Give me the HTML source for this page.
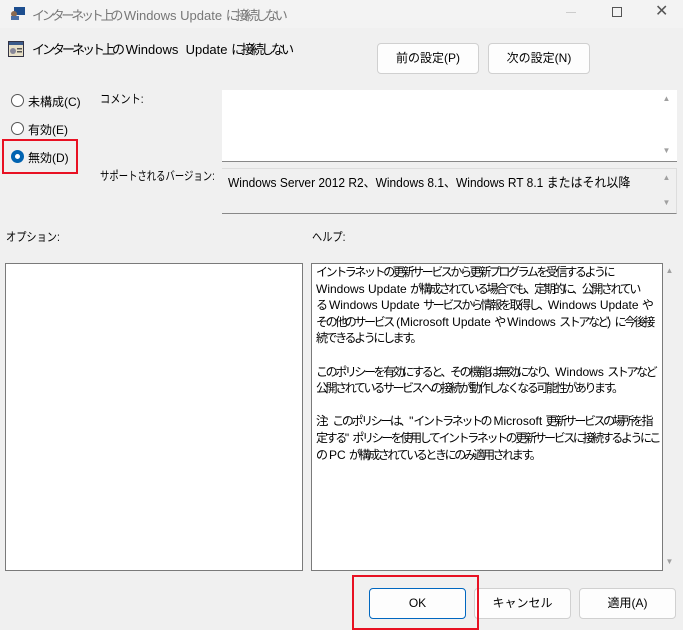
<!DOCTYPE html>
<html><head><meta charset="utf-8"><style>
*{box-sizing:border-box}
body{margin:0;width:683px;height:630px;background:#f0f0f0;font-family:"Liberation Sans","Noto Sans CJK JP",sans-serif;font-size:12px;color:#000;position:relative;overflow:hidden}
.a{position:absolute;white-space:nowrap}
.sq{transform-origin:0 0}
.l{letter-spacing:0}
.btn{position:absolute;background:#fdfdfd;border:1px solid #d0d0d0;border-radius:4px;text-align:center;font-size:12px}
.box{position:absolute;background:#fff;border:1px solid #7a7a7a}
.sb{position:absolute;width:15px;color:#a0a0a0;font-size:8px;text-align:center}
.radio{position:absolute;width:13px;height:13px;border:1px solid #555;border-radius:50%;background:#fff}
</style></head><body>
<div class="a" style="left:0;top:0;width:683px;height:28px;background:#f3f3f3"></div>
<svg class="a" style="left:10px;top:6px" width="16" height="14"><rect x="4" y="1" width="11" height="8" fill="#1d4e8f"/><circle cx="4" cy="8" r="3" fill="#8a6a50"/><rect x="1" y="10" width="8" height="4" fill="#4a6fa5"/></svg>
<div class="a" style="left:32px;top:5px;color:#777;font-size:13px;letter-spacing:-3.2px">インターネット上の<span class="l">&nbsp;Windows Update&nbsp;</span>に接続しない</div>
<div class="a" style="left:566px;top:12px;width:10px;border-top:1px solid #ccc"></div>
<div class="a" style="left:612px;top:7px;width:10px;height:10px;border:1px solid #555"></div>
<div class="a" style="left:655px;top:1px;font-size:16px;color:#555">✕</div>
<svg class="a" style="left:8px;top:41px" width="16" height="16"><rect x="0.5" y="0.5" width="15" height="15" fill="#e8e0c8" stroke="#334"/><rect x="1" y="1" width="14" height="3" fill="#3a5a8a"/><circle cx="5" cy="10" r="3" fill="#889"/><rect x="9" y="7" width="5" height="1.5" fill="#555"/><rect x="9" y="10" width="5" height="1.5" fill="#555"/></svg>
<div class="a" style="left:32px;top:39px;font-size:13px;letter-spacing:-3px">インターネット上の<span class="l">&nbsp;Windows&nbsp; Update&nbsp;</span>に接続しない</div>
<div class="btn" style="left:377px;top:43px;width:102px;height:31px;line-height:29px">前の設定(P)</div>
<div class="btn" style="left:488px;top:43px;width:102px;height:31px;line-height:29px">次の設定(N)</div>
<div class="radio" style="left:11px;top:94px"></div><div class="a" style="left:28px;top:93px">未構成(C)</div>
<div class="radio" style="left:11px;top:122px"></div><div class="a" style="left:28px;top:121px">有効(E)</div>
<div class="radio" style="left:11px;top:150px;border:4px solid #0063b1"></div><div class="a" style="left:28px;top:149px">無効(D)</div>
<div class="a" style="left:2px;top:139px;width:76px;height:35px;border:2px solid #e81123"></div>
<div class="a sq" style="left:100px;top:90px;transform:scaleX(0.85)">コメント:</div>
<div class="a sq" style="left:100px;top:167px;transform:scaleX(0.78)">サポートされるバージョン:</div>
<div class="a" style="left:222px;top:90px;width:455px;height:72px;background:#fff;border-bottom:1px solid #888"></div>
<div class="sb" style="left:659px;top:94px">▲</div><div class="sb" style="left:659px;top:146px">▼</div>
<div class="a" style="left:222px;top:168px;width:455px;height:46px;border-top:1px solid #ddd;border-bottom:1px solid #888;border-right:1px solid #ddd"></div>
<div class="a sq" style="left:228px;top:172px;font-size:13px;transform:scaleX(0.92)">Windows Server 2012 R2、Windows 8.1、Windows RT 8.1 またはそれ以降</div>
<div class="sb" style="left:659px;top:173px">▲</div><div class="sb" style="left:659px;top:198px">▼</div>
<div class="a sq" style="left:6px;top:228px;transform:scaleX(0.85)">オプション:</div>
<div class="a sq" style="left:312px;top:228px;transform:scaleX(0.85)">ヘルプ:</div>
<div class="box" style="left:5px;top:263px;width:298px;height:308px"></div>
<div class="box" style="left:311px;top:263px;width:352px;height:308px"></div>
<div class="a" style="left:316px;top:264px;line-height:16.6px;font-size:12px;letter-spacing:-2.4px">イントラネットの更新サービスから更新プログラムを受信するように<br><span class="l">Windows Update </span>が構成されている場合でも、定期的に、公開されてい<br>る<span class="l"> Windows Update </span>サービスから情報を取得し、<span class="l">Windows Update </span>や<br>その他のサービス<span class="l"> (Microsoft Update </span>や<span class="l"> Windows </span>ストアなど<span class="l">) </span>に今後接<br>続できるようにします。<br><br>このポリシーを有効にすると、その機能は無効になり、<span class="l">Windows </span>ストアなど<br>公開されているサービスへの接続が動作しなくなる可能性があります。<br><br>注<span class="l">: </span>このポリシーは、<span class="l">"</span>イントラネットの<span class="l"> Microsoft </span>更新サービスの場所を指<br>定する<span class="l">" </span>ポリシーを使用してイントラネットの更新サービスに接続するようにこ<br>の<span class="l"> PC </span>が構成されているときにのみ適用されます。</div>
<div class="sb" style="left:662px;top:266px">▲</div><div class="sb" style="left:662px;top:557px">▼</div>
<div class="btn" style="left:369px;top:588px;width:97px;height:31px;line-height:29px;border-color:#0067c0">OK</div>
<div class="btn" style="left:474px;top:588px;width:97px;height:31px;line-height:29px">キャンセル</div>
<div class="btn" style="left:579px;top:588px;width:97px;height:31px;line-height:29px">適用(A)</div>
<div class="a" style="left:352px;top:575px;width:127px;height:55px;border:2px solid #e81123"></div>
</body></html>
